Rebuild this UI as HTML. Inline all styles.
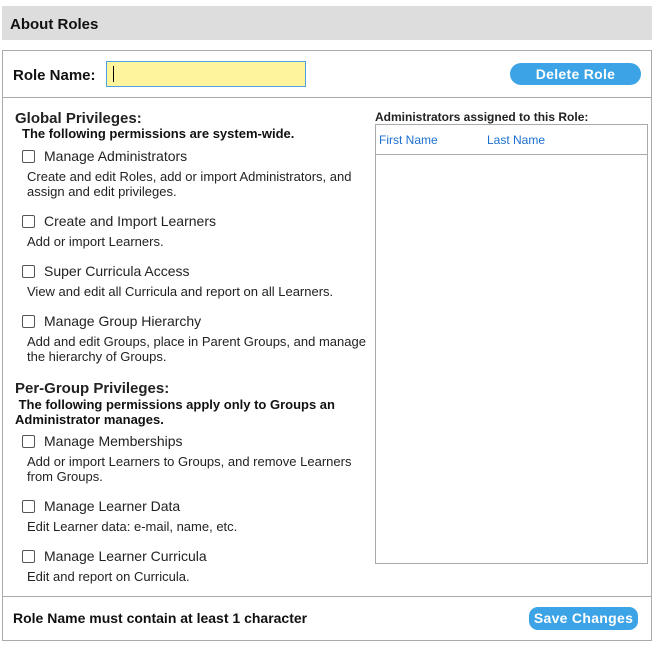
<!DOCTYPE html>
<html><head><meta charset="utf-8"><style>
*{margin:0;padding:0;box-sizing:border-box}
body{width:657px;height:649px;background:#fff;font-family:"Liberation Sans",Arial,sans-serif;color:#111;position:relative;overflow:hidden}
.a{position:absolute;white-space:nowrap}
.hdr{left:2px;top:6px;width:650px;height:34px;background:#dddddd}
.box{left:2px;top:50px;width:650px;height:591px;border:1px solid #aaa}
.hl{position:absolute;left:2px;width:650px;height:1px;background:#aaa}
.cb{position:absolute;left:22px;width:13px;height:13px;border:1px solid #555;border-radius:2px;background:#fff}
.lab{font-size:14px;color:#222;left:44px}
.desc{font-size:13px;color:#222;left:27px;line-height:15px}
.btn{background:#3ba3e6;color:#fff;font-weight:bold;font-size:14px;text-align:center;border-radius:11px;letter-spacing:0.3px}
</style></head><body>
<div class="a hdr"></div>
<div class="a" style="left:10px;top:16px;font-size:15px;font-weight:bold">About Roles</div>
<div class="a box"></div>
<div class="hl" style="top:97px"></div>
<div class="hl" style="top:596px"></div>
<div class="a" style="left:13px;top:67px;font-size:15px;font-weight:bold">Role Name:</div>
<div class="a" style="left:106px;top:61px;width:200px;height:26px;background:#fff49e;border:1px solid #4aa3e0"></div>
<div class="a" style="left:113px;top:66px;width:1px;height:16px;background:#000"></div>
<div class="a btn" style="left:510px;top:63px;width:131px;height:22px;line-height:22px">Delete Role</div>

<div class="a" style="left:15px;top:110px;font-size:15px;font-weight:bold;color:#222">Global Privileges:</div>
<div class="a" style="left:22px;top:126px;font-size:13px;font-weight:bold">The following permissions are system-wide.</div>

<div class="cb" style="top:150px"></div><div class="a lab" style="top:148px">Manage Administrators</div>
<div class="a desc" style="top:169px">Create and edit Roles, add or import Administrators, and<br>assign and edit privileges.</div>
<div class="cb" style="top:215px"></div><div class="a lab" style="top:213px">Create and Import Learners</div>
<div class="a desc" style="top:234px">Add or import Learners.</div>
<div class="cb" style="top:265px"></div><div class="a lab" style="top:263px">Super Curricula Access</div>
<div class="a desc" style="top:284px">View and edit all Curricula and report on all Learners.</div>
<div class="cb" style="top:315px"></div><div class="a lab" style="top:313px">Manage Group Hierarchy</div>
<div class="a desc" style="top:334px">Add and edit Groups, place in Parent Groups, and manage<br>the hierarchy of Groups.</div>

<div class="a" style="left:15px;top:380px;font-size:15px;font-weight:bold;color:#222">Per-Group Privileges:</div>
<div class="a" style="left:15px;top:397px;font-size:13px;font-weight:bold;line-height:15px">&nbsp;The following permissions apply only to Groups an<br>Administrator manages.</div>

<div class="cb" style="top:435px"></div><div class="a lab" style="top:433px">Manage Memberships</div>
<div class="a desc" style="top:454px">Add or import Learners to Groups, and remove Learners<br>from Groups.</div>
<div class="cb" style="top:500px"></div><div class="a lab" style="top:498px">Manage Learner Data</div>
<div class="a desc" style="top:519px">Edit Learner data: e-mail, name, etc.</div>
<div class="cb" style="top:550px"></div><div class="a lab" style="top:548px">Manage Learner Curricula</div>
<div class="a desc" style="top:569px">Edit and report on Curricula.</div>

<div class="a" style="left:375px;top:110px;font-size:12px;font-weight:bold;color:#222">Administrators assigned to this Role:</div>
<div class="a" style="left:375px;top:124px;width:273px;height:440px;border:1px solid #aaa"></div>
<div class="a" style="left:375px;top:154px;width:273px;height:1px;background:#aaa"></div>
<div class="a" style="left:379px;top:133px;font-size:12px;color:#1a6fd0">First Name</div>
<div class="a" style="left:487px;top:133px;font-size:12px;color:#1a6fd0">Last Name</div>

<div class="a" style="left:13px;top:610px;font-size:14px;font-weight:bold">Role Name must contain at least 1 character</div>
<div class="a btn" style="left:529px;top:607px;width:109px;height:23px;line-height:23px;border-radius:9px">Save Changes</div>
</body></html>
